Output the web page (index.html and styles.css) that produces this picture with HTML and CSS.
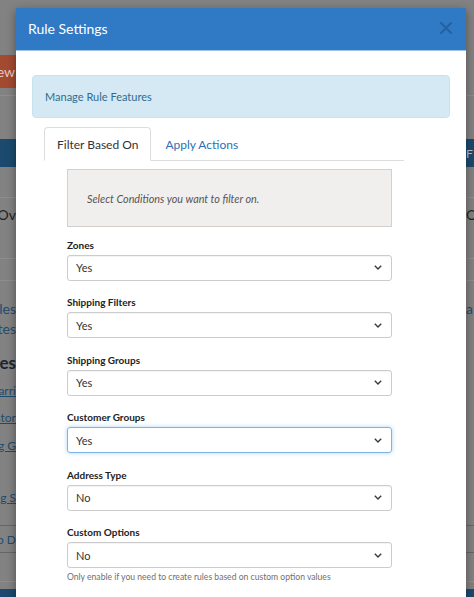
FILE: index.html
```html
<!DOCTYPE html>
<html>
<head>
<meta charset="utf-8">
<link rel="stylesheet" href="styles.css">
</head>
<body>
<div class="page">
  <div class="row r1"><div class="lc"></div><div class="mid"></div><div class="rc"></div></div>
  <div class="row r2"><div class="lc btn-orange"><span>New</span></div><div class="mid"></div><div class="rc"></div></div>
  <div class="row r3 line"><div class="lc"></div><div class="mid"></div><div class="rc"></div></div>
  <div class="row r4"><div class="lc"></div><div class="mid"></div><div class="rc"></div></div>
  <div class="row r5 bar"><div class="lc"></div><div class="mid"></div><div class="rc"><span>F</span></div></div>
  <div class="row r6 line"><div class="lc"></div><div class="mid"></div><div class="rc"></div></div>
  <div class="row r7 line"><div class="lc"><span>Ov</span></div><div class="mid"></div><div class="rc"><span>O</span></div></div>
  <div class="row r8 line"><div class="lc"></div><div class="mid"></div><div class="rc"></div></div>
  <div class="row r9"><div class="lc"></div><div class="mid"></div><div class="rc"></div></div>
  <div class="row t1"><div class="lc link"><span>Rules</span></div><div class="mid"></div><div class="rc link"><span>a</span></div></div>
  <div class="row t2"><div class="lc link"><span>Rates</span></div><div class="mid"></div><div class="rc"></div></div>
  <div class="row sp1"></div>
  <div class="row t3"><div class="lc head"><span>Rules</span></div><div class="mid"></div><div class="rc"></div></div>
  <div class="row t4"><div class="lc link u"><span>Carri</span></div><div class="mid"></div><div class="rc"></div></div>
  <div class="row t5"><div class="lc link u"><span>Custor</span></div><div class="mid"></div><div class="rc"></div></div>
  <div class="row t6"><div class="lc link u"><span>Zing G</span></div><div class="mid"></div><div class="rc"></div></div>
  <div class="row sp2"></div>
  <div class="row t7"><div class="lc link u"><span>Using S</span></div><div class="mid"></div><div class="rc"></div></div>
  <div class="row sp3"></div>
  <div class="row t8 boxed"><div class="lc link"><span>Map D</span></div><div class="mid"></div><div class="rc"></div></div>
  <div class="row t9 line"><div class="lc"></div><div class="mid"></div><div class="rc"></div></div>
  <div class="row sp4"></div>
  <div class="row t10 bar"><div class="lc"></div><div class="mid"></div><div class="rc"></div></div>
</div>

<div class="modal">
  <div class="modal-header">
    <h4 class="modal-title">Rule Settings</h4>
    <span class="close" aria-label="Close">
      <svg width="14" height="14" viewBox="0 0 14 14"><path d="M2 2 L12 12 M12 2 L2 12" stroke="#245f9c" stroke-width="2" stroke-linecap="round" fill="none"/></svg>
    </span>
  </div>
  <div class="modal-body">
    <div class="info-box">Manage Rule Features</div>
    <div class="tabs">
      <div class="tab active">Filter Based On</div>
      <div class="tab">Apply Actions</div>
    </div>
    <div class="pane">
      <div class="conditions">Select Conditions you want to filter on.</div>

      <div class="group">
        <label>Zones</label>
        <div class="select"><span>Yes</span><svg class="chev" width="8" height="5" viewBox="0 0 8 5"><path d="M0.8 0.8 L4 4 L7.2 0.8" stroke="#3a3a3a" stroke-width="1.4" fill="none"/></svg></div>
      </div>
      <div class="group">
        <label>Shipping Filters</label>
        <div class="select"><span>Yes</span><svg class="chev" width="8" height="5" viewBox="0 0 8 5"><path d="M0.8 0.8 L4 4 L7.2 0.8" stroke="#3a3a3a" stroke-width="1.4" fill="none"/></svg></div>
      </div>
      <div class="group">
        <label>Shipping Groups</label>
        <div class="select"><span>Yes</span><svg class="chev" width="8" height="5" viewBox="0 0 8 5"><path d="M0.8 0.8 L4 4 L7.2 0.8" stroke="#3a3a3a" stroke-width="1.4" fill="none"/></svg></div>
      </div>
      <div class="group">
        <label>Customer Groups</label>
        <div class="select focus"><span>Yes</span><svg class="chev" width="8" height="5" viewBox="0 0 8 5"><path d="M0.8 0.8 L4 4 L7.2 0.8" stroke="#3a3a3a" stroke-width="1.4" fill="none"/></svg></div>
      </div>
      <div class="group">
        <label>Address Type</label>
        <div class="select"><span>No</span><svg class="chev" width="8" height="5" viewBox="0 0 8 5"><path d="M0.8 0.8 L4 4 L7.2 0.8" stroke="#3a3a3a" stroke-width="1.4" fill="none"/></svg></div>
      </div>
      <div class="group last">
        <label>Custom Options</label>
        <div class="select"><span>No</span><svg class="chev" width="8" height="5" viewBox="0 0 8 5"><path d="M0.8 0.8 L4 4 L7.2 0.8" stroke="#3a3a3a" stroke-width="1.4" fill="none"/></svg></div>
        <p class="help">Only enable if you need to create rules based on custom option values</p>
      </div>
    </div>
  </div>
</div>
</body>
</html>
```

FILE: styles.css
```css
html, body {
  margin: 0;
  padding: 0;
}
body {
  width: 474px;
  height: 597px;
  overflow: hidden;
  background: #828282;
  font-family: Lato, "Open Sans", "Liberation Sans", sans-serif;
  position: relative;
}

/* dimmed page behind the modal */
.page {
  display: flex;
  flex-direction: column;
}
.row {
  display: grid;
  grid-template-columns: 16px 1fr 8px;
  box-sizing: border-box;
  flex-shrink: 0;
}
.lc, .rc {
  display: flex;
  overflow: hidden;
  white-space: nowrap;
  font-size: 14px;
  color: #262626;
}
.lc { justify-content: flex-end; }
.rc { justify-content: flex-start; }
.lc span, .rc span { flex-shrink: 0; }
.line { border-bottom: 1px solid #8e8e8e; }
.r1 { height: 55px; }
.r2 { height: 33px; }
.btn-orange { background: #a44a30; align-items: center; }
.btn-orange span { color: #e3cbc4; font-size: 14px; padding-right: 1px; }
.r3 { height: 8px; }
.r4 { height: 43px; }
.bar { background: #1b4a6e; }
.r5 { height: 28px; align-items: center; }
.r5 .rc { align-items: center; color: #b8c4cf; font-size: 12px; }
.r6 { height: 31px; }
.r7 { height: 61px; }
.r7 .lc, .r7 .rc { padding-top: 8px; font-size: 14px; color: #222; }
.r8 { height: 22px; }
.r9 { height: 18px; }
.t1, .t2, .t3, .t4, .t5, .t6, .t7, .t8 { align-items: center; }
.t1 .lc, .t2 .lc, .t1 .rc { align-items: center; font-size: 14px; }
.t1 { height: 19px; }
.t2 { height: 20px; }
.sp1 { height: 10px; }
.link span { color: #1f4c6e; }
.u { align-items: center; }
.u span { text-decoration: underline; font-size: 12px; }
.t3 { height: 28px; }
.t3 .lc { align-items: center; }
.head span { font-weight: 700; font-size: 17px; color: #1c2630; }
.t4 { height: 28px; }
.t5 { height: 26px; }
.t6 { height: 30px; }
.sp2 { height: 23px; }
.t7 { height: 28px; }
.sp3 { height: 14px; }
.t8 { height: 28px; border-top: 1px solid #666; border-bottom: 1px solid #666; }
.t8 .lc { align-items: center; }
.t8 .lc span { font-size: 12px; }
.t9 { height: 29px; }
.sp4 { height: 7px; }
.t10 { height: 20px; }

/* modal */
.modal {
  position: absolute;
  left: 16px;
  top: 8px;
  width: 450px;
  height: 620px;
  background: #fff;
  box-shadow: 0 3px 9px rgba(0, 0, 0, 0.4);
}
.modal-header {
  height: 43px;
  background: #3079c5;
  border-bottom: 1px solid #9cc3e8;
  box-sizing: border-box;
  display: flex;
  align-items: center;
  justify-content: space-between;
  padding: 0 13px 2px 12px;
}
.modal-title {
  margin: 0;
  font-size: 14px;
  font-weight: 400;
  color: #fff;
}
.close {
  display: flex;
  opacity: 0.9;
}
.modal-body {
  padding: 24px 16px 0;
}
.info-box {
  height: 43px;
  box-sizing: border-box;
  background: #d4e9f3;
  border: 1px solid #c9e3ee;
  border-radius: 4px;
  padding-left: 12px;
  display: flex;
  align-items: center;
  font-size: 11px;
  color: #2f6c91;
}
.tabs {
  margin: 9px 46px 0 12px;
  display: flex;
  border-bottom: 1px solid #dddddd;
  height: 33px;
}
.tab {
  padding: 0 12px;
  margin-right: 2px;
  font-size: 12px;
  color: #2b71b4;
  display: flex;
  align-items: center;
  box-sizing: border-box;
  height: 34px;
}
.tab.active {
  color: #333;
  border: 1px solid #dddddd;
  border-bottom-color: #fff;
  border-radius: 4px 4px 0 0;
  background: #fff;
}
.pane {
  margin: 8px 58px 0 35px;
}
.conditions {
  height: 58px;
  box-sizing: border-box;
  background: #f1efee;
  border: 1px solid #d4d0ce;
  padding-left: 19px;
  display: flex;
  align-items: center;
  font-style: italic;
  font-size: 10.8px;
  color: #555;
}
.group {
  margin-bottom: 14.6px;
}
.conditions + .group { margin-top: 10.5px; }
.group label {
  display: block;
  font-size: 10px;
  font-weight: 700;
  color: #222;
  line-height: 14px;
  margin-bottom: 3px;
}
.select {
  height: 26px;
  box-sizing: border-box;
  border: 1px solid #cccccc;
  border-radius: 3px;
  display: flex;
  align-items: center;
  justify-content: space-between;
  padding: 0 9px 0 8px;
  font-size: 11px;
  color: #333;
  box-shadow: inset 0 1px 1px rgba(0, 0, 0, 0.05);
}
.select.focus {
  border-color: #7eb4e2;
  box-shadow: 0 0 4px rgba(102, 175, 233, 0.55);
}
.help {
  margin: 4px 0 0;
  font-size: 8.6px;
  color: #6f6f6f;
}
```
